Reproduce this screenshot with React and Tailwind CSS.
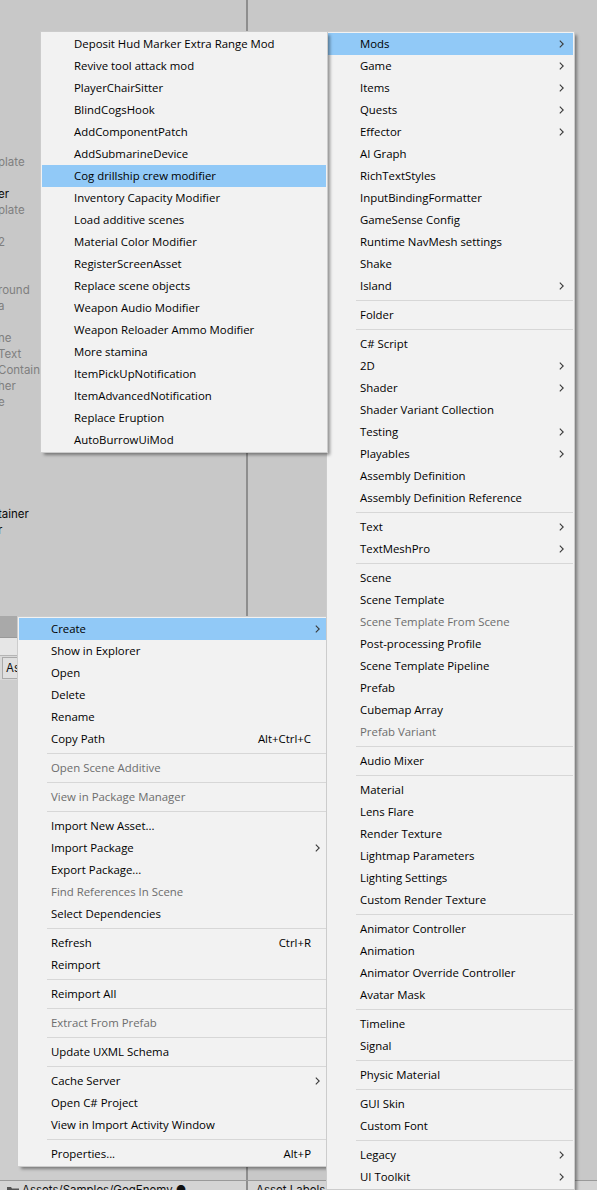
import React from 'react';
import clsx from 'clsx';

// '-' separator, '~' disabled, trailing '>' submenu arrow, '|' shortcut
const modItems = [
    'Deposit Hud Marker Extra Range Mod', 'Revive tool attack mod', 'PlayerChairSitter', 'BlindCogsHook',
    'AddComponentPatch', 'AddSubmarineDevice', 'Cog drillship crew modifier', 'Inventory Capacity Modifier',
    'Load additive scenes', 'Material Color Modifier', 'RegisterScreenAsset', 'Replace scene objects',
    'Weapon Audio Modifier', 'Weapon Reloader Ammo Modifier', 'More stamina', 'ItemPickUpNotification',
    'ItemAdvancedNotification', 'Replace Eruption', 'AutoBurrowUiMod'
];

const createItems = [
    'Mods>', 'Game>', 'Items>', 'Quests>', 'Effector>', 'AI Graph', 'RichTextStyles', 'InputBindingFormatter',
    'GameSense Config', 'Runtime NavMesh settings', 'Shake', 'Island>', '-',
    'Folder', '-',
    'C# Script', '2D>', 'Shader>', 'Shader Variant Collection', 'Testing>', 'Playables>', 'Assembly Definition',
    'Assembly Definition Reference', '-',
    'Text>', 'TextMeshPro>', '-',
    'Scene', 'Scene Template', '~Scene Template From Scene', 'Post-processing Profile', 'Scene Template Pipeline',
    'Prefab', 'Cubemap Array', '~Prefab Variant', '-',
    'Audio Mixer', '-',
    'Material', 'Lens Flare', 'Render Texture', 'Lightmap Parameters', 'Lighting Settings', 'Custom Render Texture', '-',
    'Animator Controller', 'Animation', 'Animator Override Controller', 'Avatar Mask', '-',
    'Timeline', 'Signal', '-',
    'Physic Material', '-',
    'GUI Skin', 'Custom Font', '-',
    'Legacy>', 'UI Toolkit>'
];

const assetItems = [
    'Create>', 'Show in Explorer', 'Open', 'Delete', 'Rename', 'Copy Path|Alt+Ctrl+C', '-',
    '~Open Scene Additive', '-',
    '~View in Package Manager', '-',
    'Import New Asset...', 'Import Package>', 'Export Package...', '~Find References In Scene', 'Select Dependencies', '-',
    'Refresh|Ctrl+R', 'Reimport', '-',
    'Reimport All', '-',
    '~Extract From Prefab', '-',
    'Update UXML Schema', '-',
    'Cache Server>', 'Open C# Project', 'View in Import Activity Window', '-',
    'Properties...|Alt+P'
];

// inspector labels peeking out from behind the menus, one per 16px row (null = empty row)
const inspectorRows = [
    ['plate', 'gray'], null, ['er', 'black'], ['plate', 'gray'], null, ['2', 'gray'], null, null,
    ['round', 'gray'], ['a', 'gray'], null, ['ne', 'gray'], ['Text', 'gray'], ['Container', 'gray'],
    ['her', 'gray'], ['e', 'gray'], null, null, null, null, null, null, ['tainer', 'black'], ['r', 'black']
];

function parse(raw) {
    if (raw === '-') return { sep: true };
    let label = raw;
    const item = {};
    if (label.startsWith('~')) { item.disabled = true; label = label.slice(1); }
    if (label.endsWith('>')) { item.arrow = true; label = label.slice(0, -1); }
    const [text, shortcut] = label.split('|');
    return { ...item, label: text, shortcut };
}

function Chevron() {
    return (
        <svg width="5" height="8" viewBox="0 0 5 8" className="shrink-0">
            <path d="M0.8 0.6 L4.2 4 L0.8 7.4" fill="none" stroke="#3a3a3a" strokeWidth="1.1" />
        </svg>
    );
}

function Menu({ items, active, className, arrowPad }) {
    return (
        <div className={clsx('absolute border border-[#cccccc] bg-[#f2f2f2] p-px shadow-[3px_3px_3px_-1px_rgba(0,0,0,0.4)]', className)}>
            {items.map((raw, i) => {
                const item = parse(raw);
                if (item.sep) {
                    return (
                        <div key={i} className="flex h-[7px] items-center pl-[28px]">
                            <div className="h-px flex-1 bg-[#d7d7d7]" />
                        </div>
                    );
                }
                return (
                    <div
                        key={i}
                        className={clsx('flex h-[22px] items-center pl-8', item.label === active && 'bg-[#91c9f7]')}
                    >
                        <span className={clsx('flex-1 whitespace-nowrap', item.disabled ? 'text-[#6d6d6d]' : 'text-black')}>
                            {item.label}
                        </span>
                        {item.shortcut && <span className="pr-[15px] text-black">{item.shortcut}</span>}
                        {item.arrow && <span className={arrowPad}><Chevron /></span>}
                    </div>
                );
            })}
        </div>
    );
}

export default function App() {
    return (
        <div className="relative flex h-[1190px] w-[597px] flex-col overflow-hidden bg-[#c8c8c8] font-['Open_Sans',sans-serif] text-[11.4px] leading-[22px]">
            {/* editor panels behind the menus */}
            <div className="flex h-[616px]">
                <div className="w-[246px] overflow-hidden pt-[154px] font-['Inter',sans-serif] text-[11.5px] leading-[16px]">
                    {inspectorRows.map((row, i) => (
                        <div key={i} className="h-[16px] whitespace-nowrap">
                            {row && (
                                <span className={clsx('-ml-[2px]', row[1] === 'gray' ? 'text-[#7f7f7f]' : 'text-[#0a0a0a]')}>
                                    {row[0]}
                                </span>
                            )}
                        </div>
                    ))}
                </div>
                <div className="w-[2px] bg-[#8e8e8e]" />
                <div className="flex-1" />
            </div>

            <div className="flex flex-1">
                <div className="flex w-[246px] flex-col">
                    <div className="h-[22px] border-b border-[#999] bg-[#a9a9a9]" />
                    <div className="h-[18px] border-b border-[#b5b5b5] bg-[#e6e6e6]" />
                    <div className="flex h-[24px] items-center bg-[#d9d9d9] pl-[2px]">
                        <div className="h-[22px] border border-[#aaa] bg-[#e0e0e0] px-[3px] font-['Inter',sans-serif] text-[11.5px] leading-[20px] text-[#111]">
                            Assets
                        </div>
                    </div>
                    <div className="flex-1 bg-[#cdcdcd]" />
                </div>
                <div className="w-[2px] bg-[#8e8e8e]" />
                <div className="flex-1" />
            </div>

            <div className="flex h-[10px] shrink-0 border-t border-[#9a9a9a] bg-[#d4d4d4] font-['Inter',sans-serif] text-[11.5px] leading-[20px] text-[#111]">
                <div className="flex w-[246px] items-start gap-[3px] pl-[7px]">
                    <svg width="12" height="10" viewBox="0 0 12 10" className="mt-[5px]">
                        <path d="M0 1h4l1 1.5h7V10H0z" fill="#555" />
                    </svg>
                    <span className="-mt-[1px] whitespace-nowrap">Assets/Samples/GogEnemy ●</span>
                </div>
                <div className="w-[2px] bg-[#8e8e8e]" />
                <span className="-mt-[1px] pl-[8px] whitespace-nowrap">Asset Labels</span>
            </div>

            {/* context menus */}
            <Menu items={assetItems} active="Create" arrowPad="pr-[6px]" className="left-[17px] top-[616px] w-[311px]" />
            <Menu items={createItems} active="Mods" arrowPad="pr-[9px]" className="left-[326px] top-[31px] w-[249px]" />
            <Menu items={modItems} active="Cog drillship crew modifier" className="left-[40px] top-[31px] w-[288px]" />
        </div>
    );
}
